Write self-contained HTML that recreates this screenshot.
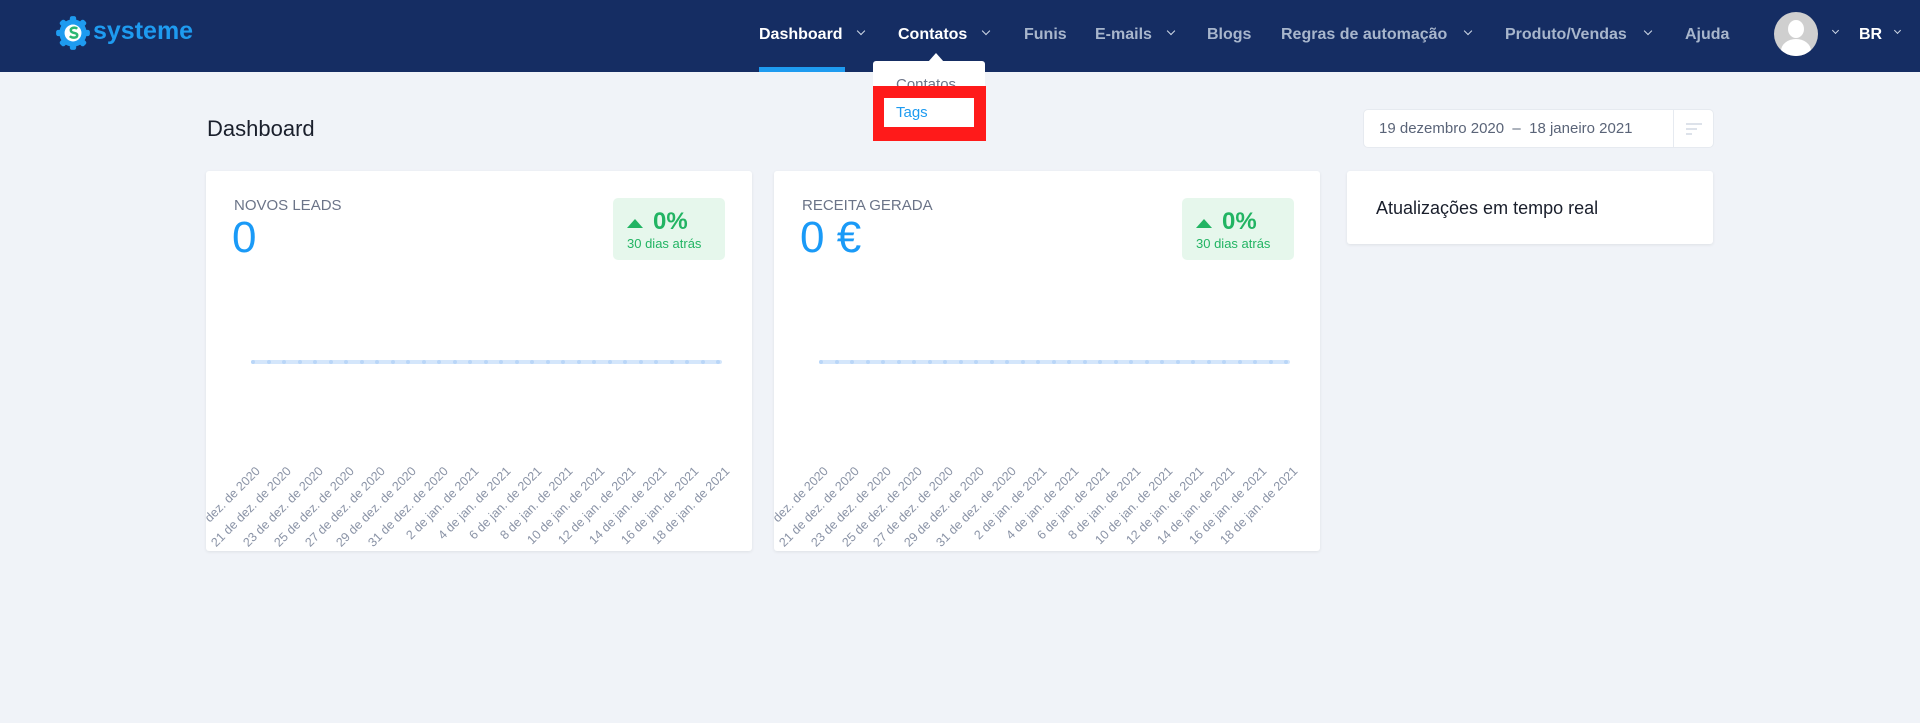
<!DOCTYPE html>
<html><head><meta charset="utf-8"><style>
*{margin:0;padding:0;box-sizing:border-box}
body{width:1920px;height:723px;background:#f0f3f8;font-family:"Liberation Sans",sans-serif;position:relative;overflow:hidden}
.nav{position:absolute;left:0;top:0;width:1920px;height:72px;background:#152d63}
.ni{position:absolute;top:26px;font-size:16px;font-weight:bold;color:#a8b6cc;white-space:nowrap}
.ni.w{color:#fff}
.chev{position:absolute;top:28px;width:6px;height:6px;border-right:1.5px solid #cfd8e6;border-bottom:1.5px solid #cfd8e6;transform:rotate(45deg)}
.card{position:absolute;background:#fff;border-radius:3px;box-shadow:0 1px 3px rgba(0,0,0,.08);overflow:hidden}
.lbl{position:absolute;left:28px;top:26px;font-size:15px;color:#6b7488}
.big{position:absolute;left:26px;top:42px;font-size:44px;color:#1a9af7}
.badge{position:absolute;top:27px;width:112px;height:62px;background:#e6f7ec;border-radius:5px;color:#22b463}
.badge .p{position:absolute;left:40px;top:10px;font-size:24px;font-weight:bold}
.badge .t{position:absolute;top:11px;left:14px;width:0;height:0;border-left:8px solid transparent;border-right:8px solid transparent;border-bottom:9px solid #22b463;margin-top:10px}
.badge .s{position:absolute;left:14px;top:38px;font-size:13px}
.line{position:absolute;left:45px;top:189px;width:471px;height:4px;background:#d4e6fb;border-radius:2px}
.xl{position:absolute;font-size:12.5px;color:#8a93a6;white-space:nowrap;transform-origin:100% 0;transform:rotate(-45deg)}
</style></head><body>
<div class="nav">
 <svg style="position:absolute;left:54px;top:14px" width="38" height="38" viewBox="0 0 34 36"><g fill="#1e9bf0"><circle cx="17" cy="18" r="13"/><rect x="14" y="2" width="6" height="32" rx="2"/><rect x="1" y="15" width="32" height="6" rx="2"/><rect x="14" y="2" width="6" height="32" rx="2" transform="rotate(45 17 18)"/><rect x="14" y="2" width="6" height="32" rx="2" transform="rotate(-45 17 18)"/></g><circle cx="17" cy="18" r="8" fill="#fff"/><path d="M21 14c-2-2-7-1-6 2s6 1 6 4-5 3-7 1" stroke="#2bb673" stroke-width="2.4" fill="none"/></svg>
 <div style="position:absolute;left:93px;top:17px;font-size:25px;font-weight:bold;color:#1e9bf0">systeme</div>
 <div class="ni w" style="left:759px">Dashboard</div><div class="chev" style="left:858px"></div>
 <div style="position:absolute;left:759px;top:67px;width:86px;height:5px;background:#1e9bf0"></div>
 <div class="ni w" style="left:898px">Contatos</div><div class="chev" style="left:983px"></div>
 <div class="ni" style="left:1024px">Funis</div>
 <div class="ni" style="left:1095px">E-mails</div><div class="chev" style="left:1168px"></div>
 <div class="ni" style="left:1207px">Blogs</div>
 <div class="ni" style="left:1281px">Regras de automação</div><div class="chev" style="left:1465px"></div>
 <div class="ni" style="left:1505px">Produto/Vendas</div><div class="chev" style="left:1645px"></div>
 <div class="ni" style="left:1685px">Ajuda</div>
 <div style="position:absolute;left:1774px;top:12px;width:44px;height:44px;border-radius:50%;background:#cfcfcf;overflow:hidden"><div style="position:absolute;left:14px;top:8px;width:16px;height:18px;border-radius:50%;background:#fff"></div><div style="position:absolute;left:7px;top:27px;width:30px;height:24px;border-radius:50%;background:#fff"></div></div>
 <div class="chev" style="left:1833px;width:5px;height:5px"></div>
 <div class="ni w" style="left:1859px">BR</div><div class="chev" style="left:1895px;width:5px;height:5px"></div>
</div>
<div style="position:absolute;left:928px;top:53px;width:0;height:0;border-left:8px solid transparent;border-right:8px solid transparent;border-bottom:9px solid #fff"></div>
<div style="position:absolute;left:873px;top:61px;width:112px;height:30px;background:#fff;border-radius:3px 3px 0 0"></div>
<div style="position:absolute;left:896px;top:76px;font-size:15px;color:#6b7488">Contatos</div>
<div style="position:absolute;left:873px;top:86px;width:113px;height:55px;background:#ff1a1a"></div>
<div style="position:absolute;left:884px;top:98px;width:90px;height:29px;background:#fff"></div>
<div style="position:absolute;left:896px;top:104px;font-size:15px;color:#1e9bf0">Tags</div>

<div style="position:absolute;left:207px;top:116px;font-size:22px;color:#1a1f2c">Dashboard</div>
<div style="position:absolute;left:1364px;top:110px;width:349px;height:37px;background:#fff;border-radius:4px;box-shadow:0 0 0 1px #e6eaf0">
 <div style="position:absolute;left:15px;top:10px;font-size:15px;color:#5a6478;white-space:nowrap">19 dezembro 2020 &nbsp;– &nbsp;18 janeiro 2021</div>
 <div style="position:absolute;left:309px;top:0;width:1px;height:37px;background:#e6eaf0"></div>
 <div style="position:absolute;left:322px;top:13px;width:16px;height:2px;background:#dde2ea"></div>
 <div style="position:absolute;left:322px;top:18px;width:11px;height:2px;background:#dde2ea"></div>
 <div style="position:absolute;left:322px;top:23px;width:6px;height:2px;background:#dde2ea"></div>
</div>

<div class="card" style="left:206px;top:171px;width:546px;height:380px" id="c1">
 <div class="lbl">NOVOS LEADS</div><div class="big">0</div>
 <div class="badge" style="left:407px"><div class="t"></div><div class="p">0%</div><div class="s">30 dias atrás</div></div>
 <div class="line"></div>
</div>
<div class="card" style="left:774px;top:171px;width:546px;height:380px" id="c2">
 <div class="lbl">RECEITA GERADA</div><div class="big">0 €</div>
 <div class="badge" style="left:408px"><div class="t"></div><div class="p">0%</div><div class="s">30 dias atrás</div></div>
 <div class="line"></div>
</div>
<div class="card" style="left:1347px;top:171px;width:366px;height:73px">
 <div style="position:absolute;left:29px;top:27px;font-size:18px;color:#1a1f2c">Atualizações em tempo real</div>
</div>
<script>
var L=["19 de dez. de 2020","21 de dez. de 2020","23 de dez. de 2020","25 de dez. de 2020","27 de dez. de 2020","29 de dez. de 2020","31 de dez. de 2020","2 de jan. de 2021","4 de jan. de 2021","6 de jan. de 2021","8 de jan. de 2021","10 de jan. de 2021","12 de jan. de 2021","14 de jan. de 2021","16 de jan. de 2021","18 de jan. de 2021"];
["c1","c2"].forEach(function(id){var c=document.getElementById(id);
for(var i=0;i<16;i++){var d=document.createElement('div');d.className='xl';d.textContent=L[i];
var x=47+i*31.3;d.style.right=(546-x)+'px';d.style.top='293px';c.appendChild(d);}
for(var i=0;i<31;i++){var p=document.createElement('div');p.style.cssText='position:absolute;top:189px;width:4px;height:4px;border-radius:50%;background:#b9d6f8;left:'+(45+i*15.5)+'px';c.appendChild(p);}
});
</script>
</body></html>
